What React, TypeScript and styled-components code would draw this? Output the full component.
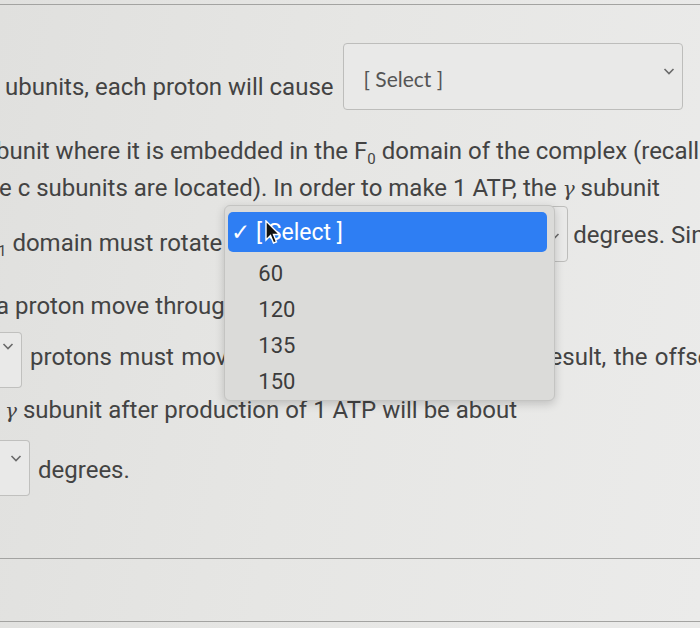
import React from "react";
import styled, { createGlobalStyle } from "styled-components";

const Global = createGlobalStyle`
  html, body { margin: 0; padding: 0; background: #e3e3e1; }
  body { font-family: Roboto, "Liberation Sans", sans-serif; }
`;

const Page = styled.div`
  position: relative;
  width: 700px;
  height: 628px;
  overflow: hidden;
  background: linear-gradient(100deg, #e0e0de 0%, #e6e6e4 45%, #ebebea 100%);
  color: #434343;
  font-family: Roboto, "Liberation Sans", sans-serif;
  font-size: 24px;
  display: flex;
  flex-direction: column;
`;

const Rule = styled.div<{ $top: number }>`
  height: 1px;
  margin-top: ${(p) => p.$top}px;
  background: #a3a3a1;
  flex: none;
`;

const Line = styled.div<{ $h: number; $mt?: number; $indent?: number }>`
  display: flex;
  align-items: center;
  height: ${(p) => p.$h}px;
  margin-top: ${(p) => p.$mt ?? 0}px;
  margin-left: ${(p) => p.$indent ?? 0}px;
  white-space: nowrap;
  flex: none;
`;

const Text = styled.span<{ $mb?: number; $ml?: number; $ws?: number }>`
  margin-bottom: ${(p) => p.$mb ?? 0}px;
  margin-left: ${(p) => p.$ml ?? 0}px;
  word-spacing: ${(p) => p.$ws ?? 0}px;
  flex: none;
`;

const SelectBox = styled.div<{ $w: number; $h: number; $ml?: number; $mr?: number }>`
  position: relative;
  flex: none;
  box-sizing: border-box;
  width: ${(p) => p.$w}px;
  height: ${(p) => p.$h}px;
  margin-left: ${(p) => p.$ml ?? 0}px;
  margin-right: ${(p) => p.$mr ?? 0}px;
  border: 1px solid #bdbdbb;
  border-radius: 4px;
  background: #e9e9e8;
  display: flex;
  align-items: flex-start;
  justify-content: space-between;
  padding: 22px 6px 0 20px;
  font-family: Lato, "Liberation Sans", sans-serif;
  font-size: 21px;
  color: #555;
`;

const Chevron = styled.svg<{ $mt?: number }>`
  width: 14px;
  height: 14px;
  margin-top: ${(p) => p.$mt ?? 0}px;
  flex: none;
  stroke: #6a6a6a;
  fill: none;
  stroke-width: 1.6;
`;

const SmallSelect = styled.div<{ $w: number; $h: number; $pt: number }>`
  flex: none;
  box-sizing: border-box;
  width: ${(p) => p.$w}px;
  height: ${(p) => p.$h}px;
  border: 1px solid #c0c0be;
  border-left: none;
  border-radius: 0 4px 4px 0;
  background: #e9e9e8;
  display: flex;
  align-items: flex-start;
  justify-content: flex-end;
  padding: ${(p) => p.$pt}px 6px 0 0;
`;

const Menu = styled.div`
  position: absolute;
  left: -3px;
  top: -2px;
  width: 331px;
  height: 196px;
  box-sizing: border-box;
  background: #dbdbd9;
  border: 1px solid #c4c4c2;
  border-radius: 6px;
  box-shadow: 0 3px 10px rgba(0, 0, 0, 0.18);
  padding: 6px 7px 0 3px;
  display: flex;
  flex-direction: column;
  font-family: Roboto, "Liberation Sans", sans-serif;
  font-size: 22px;
  color: #3c3c3c;
  z-index: 5;
`;

const Highlight = styled.div`
  position: relative;
  height: 40px;
  flex: none;
  border-radius: 5px;
  background: #2e7ef3;
  color: #fff;
  display: flex;
  align-items: center;
  padding-left: 3px;
  font-size: 23px;
`;

const Items = styled.div`
  display: flex;
  flex-direction: column;
  margin-top: 3px;
`;

const Item = styled.div`
  height: 36px;
  display: flex;
  align-items: center;
  padding-left: 30px;
`;

const Cursor = styled.svg`
  position: absolute;
  left: 36px;
  top: 8px;
  width: 18px;
  height: 26px;
`;

const Sub = styled.span`
  font-size: 15px;
  vertical-align: -5px;
`;

const Gamma = styled.span`
  font-family: "DejaVu Serif", "Liberation Serif", serif;
  font-style: italic;
  font-size: 20px;
`;

const ChevronIcon = ({ mt }: { mt?: number }) => (
  <Chevron viewBox="0 0 14 14" $mt={mt}>
    <path d="M2.5 5 L7 9.5 L11.5 5" />
  </Chevron>
);

export default function App() {
  return (
    <>
      <Global />
      <Page>
        <Rule $top={4} />
        <Line $h={67} $mt={38} $indent={5}>
          <Text $mb={-20}>ubunits, each proton will cause</Text>
          <SelectBox $w={340} $h={67} $ml={9}>
            <span>[ Select ]</span>
            <ChevronIcon mt={-2} />
          </SelectBox>
        </Line>
        <Line $h={36} $mt={24} $indent={-4}>
          <Text>
            bunit where it is embedded in the F<Sub>0</Sub> domain of the complex (recall
          </Text>
        </Line>
        <Line $h={36} $indent={-1}>
          <Text>
            e c subunits are located). In order to make 1 ATP, the <Gamma>γ</Gamma> subunit
          </Text>
        </Line>
        <Line $h={56} $indent={-2}>
          <Text $mb={-20}>
            <Sub>1</Sub> domain must rotate
          </Text>
          <SelectBox $w={342} $h={56} $ml={4} $mr={5}>
            <span />
            <ChevronIcon />
            <Menu>
              <Highlight>
                ✓ [ Select ]
                <Cursor viewBox="0 0 18 26">
                  <path d="M2 1 L2 20 L6.5 15.5 L9.5 23 L12.5 21.8 L9.5 14.5 L15.5 14.5 Z" fill="#111" stroke="#fff" strokeWidth="1.4" />
                </Cursor>
              </Highlight>
              <Items>
                <Item>60</Item>
                <Item>120</Item>
                <Item>135</Item>
                <Item>150</Item>
              </Items>
            </Menu>
          </SelectBox>
          <Text $mb={-2}>degrees. Since</Text>
        </Line>
        <Line $h={44} $mt={22} $indent={-4}>
          <Text>a proton move through the membrane,</Text>
        </Line>
        <Line $h={56} $mt={4}>
          <SmallSelect $w={22} $h={56} $pt={6}>
            <ChevronIcon />
          </SmallSelect>
          <Text $mb={6} $ml={8} $ws={1.4}>
            protons must move to make one full turn. As a result, the offset
          </Text>
        </Line>
        <Line $h={40} $mt={2} $indent={5}>
          <Text>
            <Gamma>γ</Gamma> subunit after production of 1 ATP will be about
          </Text>
        </Line>
        <Line $h={56} $mt={10}>
          <SmallSelect $w={30} $h={56} $pt={10}>
            <ChevronIcon />
          </SmallSelect>
          <Text $mb={-4} $ml={8}>
            degrees.
          </Text>
        </Line>
        <Rule $top={62} />
        <Rule $top={62} />
      </Page>
    </>
  );
}
